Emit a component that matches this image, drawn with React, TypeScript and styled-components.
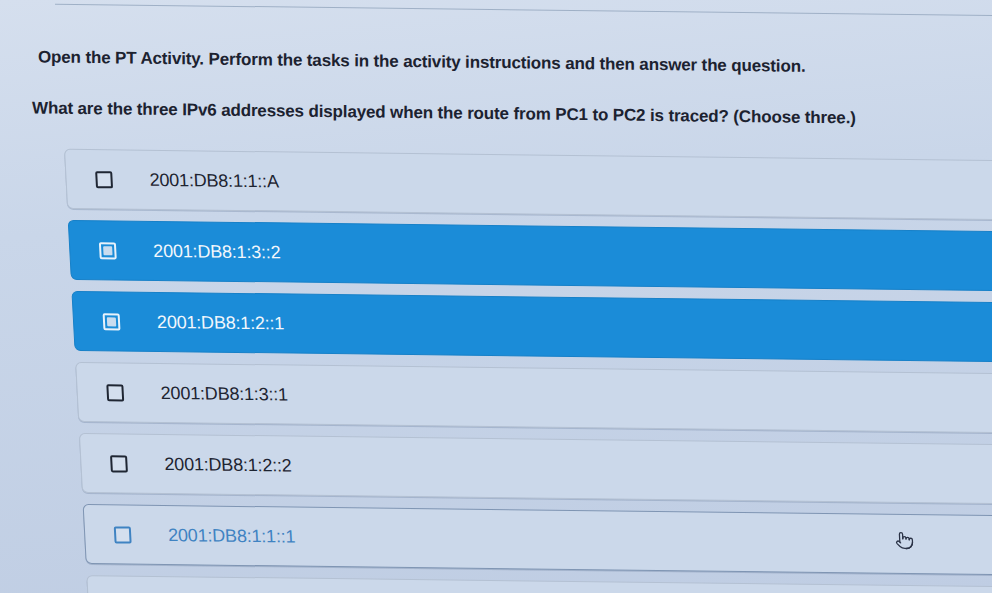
import React from 'react';
import styled, { createGlobalStyle } from 'styled-components';
import { Pointer } from 'lucide-react';

const GlobalStyle = createGlobalStyle`
  html, body {
    margin: 0;
    padding: 0;
    overflow: hidden;
  }
  body {
    background: linear-gradient(175deg, #d5dfee 0%, #c9d6e9 35%, #bfcde3 100%);
    font-family: "Liberation Sans", Arial, sans-serif;
  }
`;

type Option = {
  label: string;
  checked?: boolean;
  hover?: boolean;
};

const options: Option[] = [
  { label: '2001:DB8:1:1::A' },
  { label: '2001:DB8:1:3::2', checked: true },
  { label: '2001:DB8:1:2::1', checked: true },
  { label: '2001:DB8:1:3::1' },
  { label: '2001:DB8:1:2::2' },
  { label: '2001:DB8:1:1::1', hover: true },
  { label: '2001:DB8:1:1::2' },
];

export default function App() {
  return (
    <>
      <GlobalStyle />
      <Page>
        <TopEdge />
        <Question>
          <Line>Open the PT Activity. Perform the tasks in the activity instructions and then answer the question.</Line>
          <Line $shift={-6}>
            What are the three IPv6 addresses displayed when the route from PC1 to PC2 is traced? (Choose three.)
          </Line>
        </Question>
        <OptionList>
          {options.map((o) => (
            <OptionRow key={o.label} $checked={o.checked} $hover={o.hover}>
              <Box $checked={o.checked} $hover={o.hover}>
                {o.checked && <BoxDot />}
              </Box>
              <Label>{o.label}</Label>
              {o.hover && (
                <Cursor>
                  <Pointer size={19} strokeWidth={1.6} />
                </Cursor>
              )}
            </OptionRow>
          ))}
        </OptionList>
      </Page>
    </>
  );
}

const Page = styled.div`
  width: 992px;
  height: 593px;
  transform: skewY(0.7deg);
  transform-origin: 0 0;
`;

const TopEdge = styled.div`
  height: 3px;
  margin-left: 55px;
  border-bottom: 1px solid #9fb0c6;
`;

const Question = styled.div`
  display: flex;
  flex-direction: column;
  gap: 31px;
  padding: 43px 0 0 38px;
`;

const Line = styled.p<{ $shift?: number }>`
  margin: 0 0 0 ${(p) => p.$shift ?? 0}px;
  font-size: 17px;
  font-weight: 700;
  line-height: 20px;
  color: #1c2230;
  letter-spacing: -0.15px;
  white-space: nowrap;
`;

const OptionList = styled.div`
  display: flex;
  flex-direction: column;
  gap: 11px;
  margin: 30px -40px 0 64px;
  transform: skewX(3deg);
  transform-origin: 0 0;
`;

const OptionRow = styled.div<{ $checked?: boolean; $hover?: boolean }>`
  position: relative;
  display: flex;
  align-items: center;
  flex-shrink: 0;
  height: 58px;
  padding-left: 29px;
  border-radius: 6px;
  background: ${(p) => (p.$checked ? '#1b8cd8' : '#cbd8ea')};
  border: 1px solid
    ${(p) => (p.$checked ? '#1780c8' : p.$hover ? '#7f95b3' : '#b4c1d3')};
  box-shadow: ${(p) => (p.$checked ? 'none' : '0 1px 0 rgba(110, 130, 160, 0.35)')};
  color: ${(p) => (p.$checked ? '#f2f7fc' : p.$hover ? '#3f83c2' : '#1d2431')};
`;

const Box = styled.span<{ $checked?: boolean; $hover?: boolean }>`
  display: flex;
  align-items: center;
  justify-content: center;
  box-sizing: border-box;
  width: 17px;
  height: 17px;
  border-radius: 2px;
  border: 2px solid
    ${(p) => (p.$checked ? '#e8f2fb' : p.$hover ? '#3f83c2' : '#1f2633')};
  background: ${(p) => (p.$checked ? 'transparent' : '#d4dfee')};
`;

const BoxDot = styled.span`
  width: 9px;
  height: 9px;
  border-radius: 1px;
  background: #c9dcef;
`;

const Label = styled.span`
  margin-left: 37px;
  font-size: 18px;
  letter-spacing: -0.2px;
`;

const Cursor = styled.span`
  position: absolute;
  left: 810px;
  top: 16px;
  color: #2a3246;
  display: flex;
`;
